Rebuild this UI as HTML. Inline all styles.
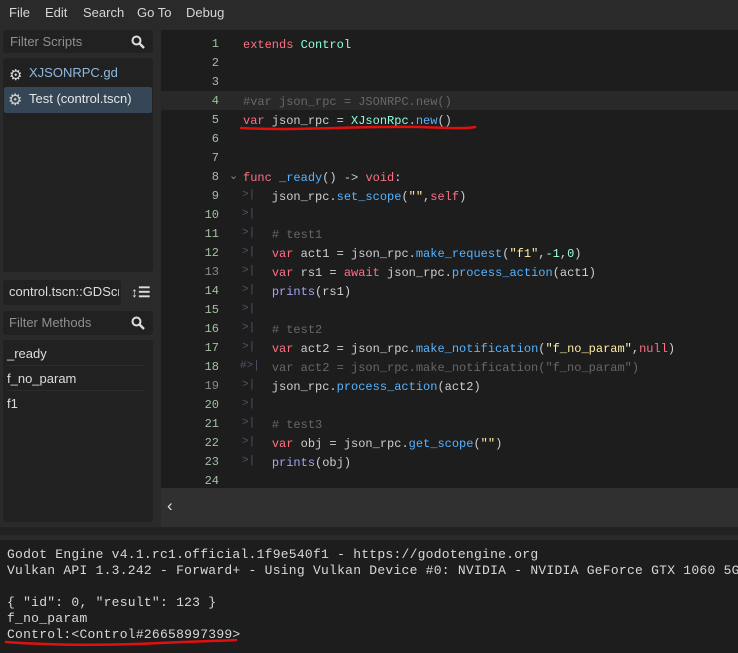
<!DOCTYPE html>
<html><head><meta charset="utf-8"><style>
*{margin:0;padding:0;box-sizing:border-box}
body{width:738px;height:653px;background:#2a2a2a;overflow:hidden;position:relative;font-family:"Liberation Sans",sans-serif;color:#dcdcdc}
.a{position:absolute}
.menu span{position:absolute;top:5px;font-size:13px;color:#d6d6d6}
.box{background:#1d1d1d;border-radius:3px}
.code{font-family:"Liberation Mono",monospace;font-size:12px;color:#cdcfd2;white-space:pre}
.ln{position:absolute;left:160px;width:59px;text-align:right;font-family:"Liberation Mono",monospace;font-size:12px;color:#a4bfa4}
.tab{position:absolute;left:242px;color:#4c5566;font-size:11px;font-family:"Liberation Mono",monospace}
.k{color:#ff7085}.t{color:#8effda}.f{color:#57b3ff}.s{color:#ffeda1}.n{color:#a1ffe0}.c{color:#676767}.b{color:#a3a3f5}
.con{font-family:"Liberation Mono",monospace;font-size:13px;letter-spacing:0.25px;color:#d8d8d8;white-space:pre;line-height:16px}
</style></head><body>
<div class="menu"><span style="left:9px">File</span><span style="left:45px">Edit</span><span style="left:83px">Search</span><span style="left:137px">Go To</span><span style="left:186px">Debug</span></div>

<div class="a box" style="left:3px;top:30px;width:150px;height:23px;background:#212121"></div>
<div class="a" style="left:10px;top:34px;font-size:13px;color:#8f8f8f">Filter Scripts</div>
<svg class="a" style="left:131px;top:35px" width="14" height="14"><circle cx="5.5" cy="5.5" r="4" stroke="#ddd" stroke-width="2" fill="none"/><path d="M8.5 8.5L13 13" stroke="#ddd" stroke-width="2.4"/></svg>

<div class="a box" style="left:3px;top:58px;width:150px;height:214px;background:#212121"></div>
<div class="a" style="left:9px;top:66px;font-size:15px;color:#ddd">⚙</div>
<div class="a" style="left:29px;top:65px;font-size:13px;color:#8fb8e0">XJSONRPC.gd</div>
<div class="a" style="left:4px;top:87px;width:148px;height:26px;background:#354757;border-radius:2px"></div>
<div class="a" style="left:8px;top:90px;font-size:16px;color:#d0d0d0">⚙</div>
<div class="a" style="left:29px;top:91px;font-size:13px;color:#e6e6e6">Test (control.tscn)</div>

<div class="a box" style="left:3px;top:280px;width:118px;height:25px;background:#212121"></div>
<div class="a" style="left:9px;top:284px;font-size:13px;color:#ddd;width:110px;overflow:hidden;white-space:nowrap">control.tscn::GDScript</div>
<div class="a" style="left:131px;top:284px;font-size:14px;color:#ddd;font-weight:bold">↕☰</div>
<div class="a box" style="left:3px;top:311px;width:150px;height:24px;background:#212121"></div>
<div class="a" style="left:9px;top:315px;font-size:13px;color:#8f8f8f">Filter Methods</div>
<svg class="a" style="left:131px;top:316px" width="14" height="14"><circle cx="5.5" cy="5.5" r="4" stroke="#ddd" stroke-width="2" fill="none"/><path d="M8.5 8.5L13 13" stroke="#ddd" stroke-width="2.4"/></svg>
<div class="a box" style="left:3px;top:340px;width:150px;height:182px;background:#212121"></div>
<div class="a" style="left:7px;top:346px;font-size:13px;color:#ddd">_ready</div>
<div class="a" style="left:7px;top:365px;width:138px;height:1px;background:#2c2c2c"></div>
<div class="a" style="left:7px;top:371px;font-size:13px;color:#ddd">f_no_param</div>
<div class="a" style="left:7px;top:390px;width:138px;height:1px;background:#2c2c2c"></div>
<div class="a" style="left:7px;top:396px;font-size:13px;color:#ddd">f1</div>

<div class="a" style="left:161px;top:30px;width:577px;height:458px;background:#1d1d1d"></div>
<div class="a" style="left:161px;top:91px;width:577px;height:19px;background:#292929"></div>
<div class="a" style="left:161px;top:488px;width:577px;height:39px;background:#303030"></div>
<div class="a" style="left:167px;top:496px;font-size:17px;color:#ddd">‹</div>
<div class="a" style="left:0;top:527px;width:738px;height:8px;background:#222"></div>
<div class="a" style="left:0;top:540px;width:738px;height:113px;background:#1d1d1d"></div>

<div id="lines"></div>
<div class="a code" style="left:243px;top:36px;line-height:19px"><span class="k">extends</span> <span class="t">Control</span>


<span class="c">#var json_rpc = JSONRPC.new()</span>
<span class="k">var</span> json_rpc = <span class="t">XJsonRpc</span>.<span class="f">new</span>()


<span class="k">func</span> <span class="f">_ready</span>() -&gt; <span class="k">void</span>:
    json_rpc.<span class="f">set_scope</span>(<span class="s">""</span>,<span class="k">self</span>)

    <span class="c"># test1</span>
    <span class="k">var</span> act1 = json_rpc.<span class="f">make_request</span>(<span class="s">"f1"</span>,<span class="n">-1</span>,<span class="n">0</span>)
    <span class="k">var</span> rs1 = <span class="k">await</span> json_rpc.<span class="f">process_action</span>(act1)
    <span class="b">prints</span>(rs1)

    <span class="c"># test2</span>
    <span class="k">var</span> act2 = json_rpc.<span class="f">make_notification</span>(<span class="s">"f_no_param"</span>,<span class="k">null</span>)
    <span class="c">var act2 = json_rpc.make_notification("f_no_param")</span>
    json_rpc.<span class="f">process_action</span>(act2)

    <span class="c"># test3</span>
    <span class="k">var</span> obj = json_rpc.<span class="f">get_scope</span>(<span class="s">""</span>)
    <span class="b">prints</span>(obj)</div>
<div class="a" style="left:229px;top:169px;color:#888;font-size:11px">⌄</div>

<svg class="a" style="left:0;top:0" width="738" height="653">
<path d="M241 128 C300 131 350 126 420 127 C450 128 465 129 475 127" stroke="#e01010" stroke-width="2.5" fill="none" stroke-linecap="round"/>
<path d="M6 642 C60 646 120 645 160 643 C200 641 220 641 236 640" stroke="#e01010" stroke-width="2.5" fill="none" stroke-linecap="round"/>
</svg>

<div class="a con" style="left:7px;top:547px">Godot Engine v4.1.rc1.official.1f9e540f1 - https://godotengine.org
Vulkan API 1.3.242 - Forward+ - Using Vulkan Device #0: NVIDIA - NVIDIA GeForce GTX 1060 5GB

{ "id": 0, "result": 123 }
f_no_param
Control:&lt;Control#26658997399&gt;</div>

<script>
var h='';for(var i=1;i<=24;i++){var y=37+(i-1)*19;var col=(i==13||i==19)?'#8a8a8a':'#a4bfa4';h+='<div class="ln" style="top:'+(y)+'px;color:'+col+'">'+i+'</div>';if(i>=9&&i<=23&&i!=18)h+='<div class="tab" style="top:'+(y)+'px">&gt;|</div>';if(i==18)h+='<div class="tab" style="left:240px;top:'+(y)+'px">#&gt;|</div>';}
document.getElementById('lines').innerHTML=h;
</script>
</body></html>
